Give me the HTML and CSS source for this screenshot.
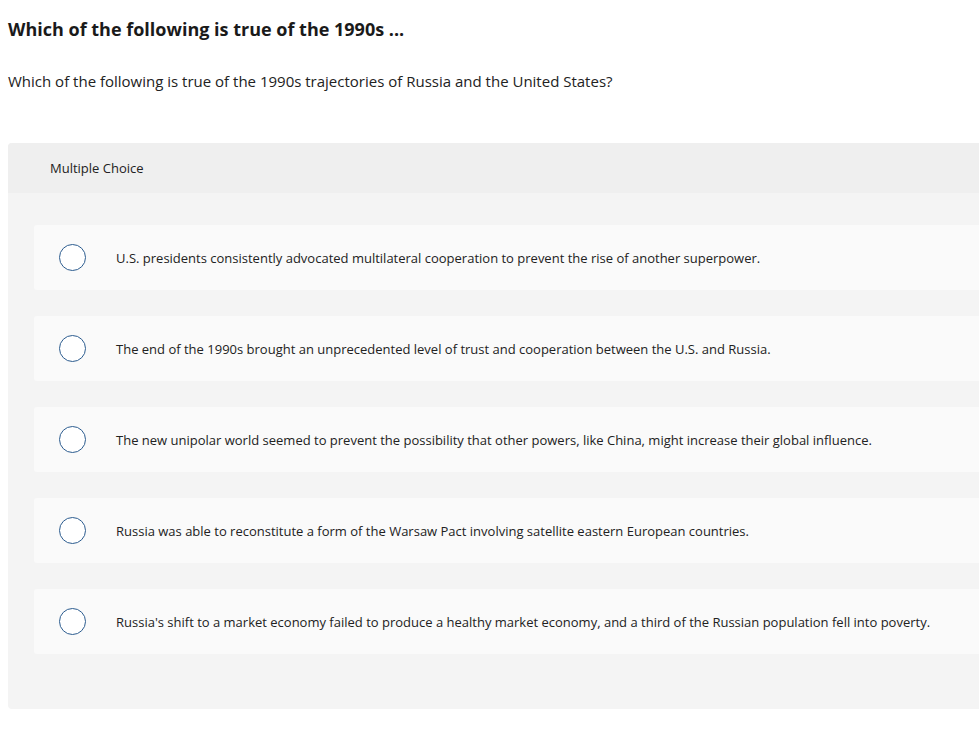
FILE: index.html
```html
<!DOCTYPE html>
<html lang="en">
<head>
  <meta charset="UTF-8">
  <title>Multiple Choice Question</title>
  <link rel="stylesheet" href="styles.css">
</head>
<body>
  <h1 class="question-title">Which of the following is true of the 1990s ...</h1>
  <p class="question-text">Which of the following is true of the 1990s trajectories of Russia and the United States?</p>

  <div class="answer-panel">
    <div class="panel-header">Multiple Choice</div>
    <div class="panel-body">
      <label class="choice">
        <span class="radio"></span>
        <span class="choice-text">U.S. presidents consistently advocated multilateral cooperation to prevent the rise of another superpower.</span>
      </label>
      <label class="choice">
        <span class="radio"></span>
        <span class="choice-text">The end of the 1990s brought an unprecedented level of trust and cooperation between the U.S. and Russia.</span>
      </label>
      <label class="choice">
        <span class="radio"></span>
        <span class="choice-text">The new unipolar world seemed to prevent the possibility that other powers, like China, might increase their global influence.</span>
      </label>
      <label class="choice">
        <span class="radio"></span>
        <span class="choice-text">Russia was able to reconstitute a form of the Warsaw Pact involving satellite eastern European countries.</span>
      </label>
      <label class="choice">
        <span class="radio"></span>
        <span class="choice-text">Russia's shift to a market economy failed to produce a healthy market economy, and a third of the Russian population fell into poverty.</span>
      </label>
    </div>
  </div>
</body>
</html>
```

FILE: styles.css
```css
body {
  margin: 0;
  padding: 0 0 0 8px;
  font-family: "Open Sans", Arial, sans-serif;
  color: #1a1a1a;
  background: #ffffff;
  overflow: hidden;
}
.question-title {
  margin: 17px 0 0;
  font-size: 18px;
  font-weight: 700;
  line-height: 24px;
  color: #1a1a1a;
}
.question-text {
  margin: 29px 0 0;
  font-size: 15px;
  line-height: 22px;
  color: #222;
}
.answer-panel {
  margin: 51px -40px 0 0;
  background: #f4f4f4;
  border-radius: 4px;
}
.panel-header {
  height: 50px;
  line-height: 50px;
  padding-left: 42px;
  background: #efefef;
  border-radius: 4px 4px 0 0;
  font-size: 13px;
  color: #222;
}
.panel-body {
  padding: 32px 0 55px 26px;
  display: flex;
  flex-direction: column;
  gap: 26px;
}
.choice {
  display: flex;
  align-items: center;
  height: 65px;
  background: #fafafa;
  border-radius: 3px;
}
.radio {
  width: 25px;
  height: 25px;
  margin-left: 25px;
  border: 1.5px solid #2c5c8f;
  border-radius: 50%;
  background: #fff;
  flex-shrink: 0;
}
.choice-text {
  margin-left: 30px;
  font-size: 13px;
  color: #222;
}
```
